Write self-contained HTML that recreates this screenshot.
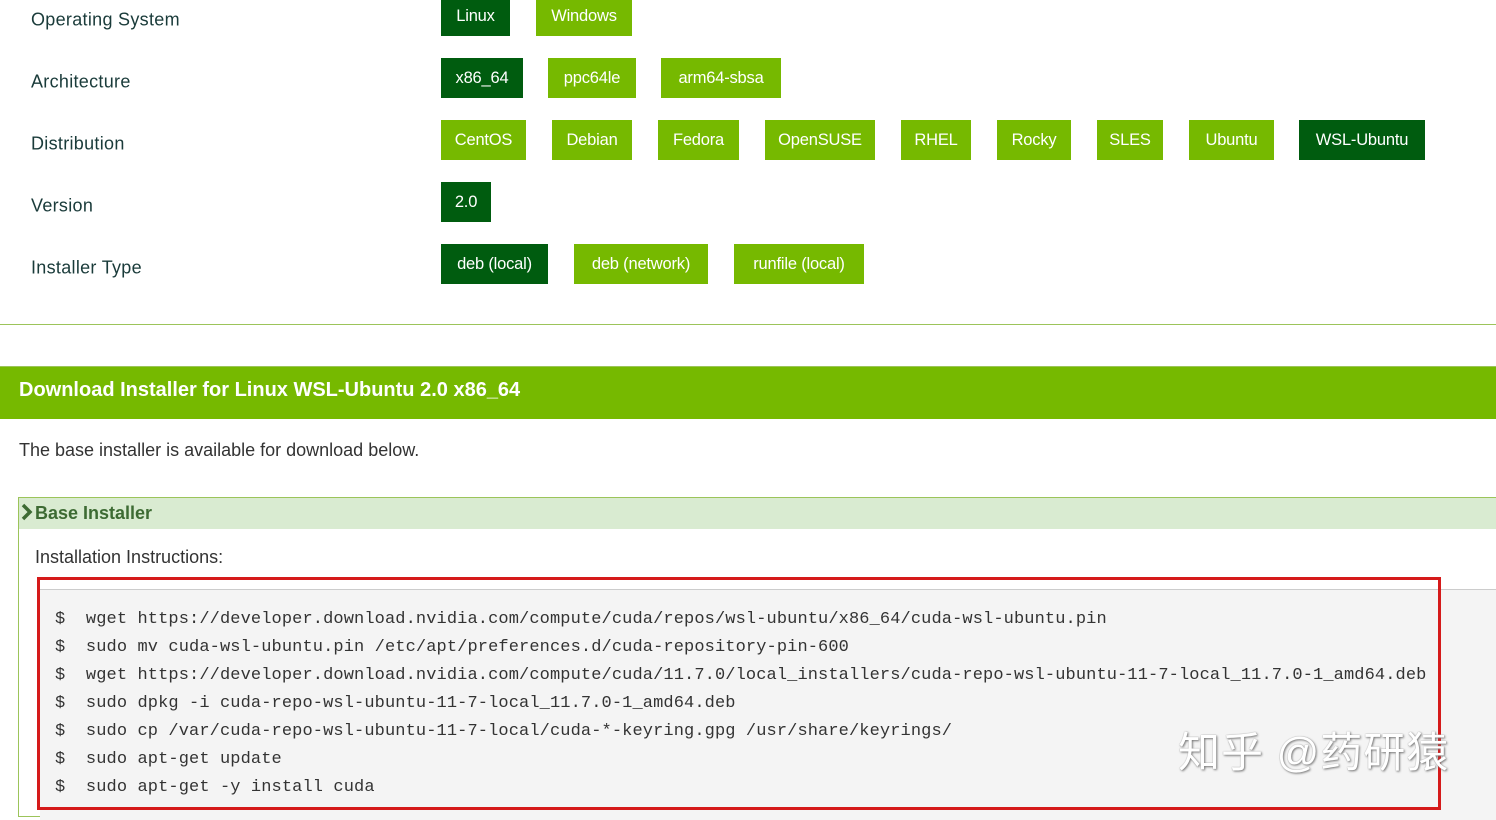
<!DOCTYPE html>
<html><head><meta charset="utf-8"><style>
body{margin:0;width:1496px;height:811px;background:#fff;position:relative;overflow:hidden;font-family:"Liberation Sans",sans-serif}
.l{position:absolute;left:31px;font-size:18px;color:#1a3b3a;letter-spacing:0.3px;transform:translateY(-50%)}
.b{position:absolute;height:40px;line-height:41px;text-align:center;color:#fff;font-size:16.5px;background:#76b900;letter-spacing:-0.2px}
.d{background:#005c0f}
.code{position:absolute;left:55px;font-family:"Liberation Mono",monospace;font-size:17px;letter-spacing:0.11px;color:#333;white-space:pre;line-height:28px}
</style></head><body>
<div class="l" style="top:20px">Operating System</div>
<div class="l" style="top:82px">Architecture</div>
<div class="l" style="top:144px">Distribution</div>
<div class="l" style="top:206px">Version</div>
<div class="l" style="top:268px">Installer Type</div>

<div class="b d" style="top:-4px;left:441px;width:69px">Linux</div>
<div class="b" style="top:-4px;left:536px;width:96px">Windows</div>

<div class="b d" style="top:58px;left:441px;width:82px">x86_64</div>
<div class="b" style="top:58px;left:548px;width:88px">ppc64le</div>
<div class="b" style="top:58px;left:661px;width:120px">arm64-sbsa</div>

<div class="b" style="top:120px;left:441px;width:85px">CentOS</div>
<div class="b" style="top:120px;left:552px;width:80px">Debian</div>
<div class="b" style="top:120px;left:658px;width:81px">Fedora</div>
<div class="b" style="top:120px;left:765px;width:110px">OpenSUSE</div>
<div class="b" style="top:120px;left:901px;width:70px">RHEL</div>
<div class="b" style="top:120px;left:997px;width:74px">Rocky</div>
<div class="b" style="top:120px;left:1097px;width:66px">SLES</div>
<div class="b" style="top:120px;left:1189px;width:85px">Ubuntu</div>
<div class="b d" style="top:120px;left:1299px;width:126px">WSL-Ubuntu</div>

<div class="b d" style="top:182px;left:441px;width:50px">2.0</div>

<div class="b d" style="top:244px;left:441px;width:107px">deb (local)</div>
<div class="b" style="top:244px;left:574px;width:134px">deb (network)</div>
<div class="b" style="top:244px;left:734px;width:130px">runfile (local)</div>

<div style="position:absolute;top:324px;left:0;width:1496px;height:1px;background:#9cc45a"></div>
<div style="position:absolute;top:366px;left:0;width:1496px;height:53px;background:#76b900;border-top:1px solid #9cc45a;box-sizing:border-box"></div>
<div style="position:absolute;top:379px;left:19px;color:#fff;font-size:20px;font-weight:bold">Download Installer for Linux WSL-Ubuntu 2.0 x86_64</div>
<div style="position:absolute;top:440px;left:19px;color:#333;font-size:18px">The base installer is available for download below.</div>

<div style="position:absolute;top:497px;left:18px;width:1478px;height:320px;border:1px solid #9cc45a;border-right:0;box-sizing:border-box"></div>
<div style="position:absolute;top:498px;left:19px;width:1477px;height:31px;background:#d9ebd1"></div>
<svg style="position:absolute;top:503px;left:21px" width="12" height="18" viewBox="0 0 12 18"><path d="M2 2 L9 9 L2 16" stroke="#3d6b33" stroke-width="3.5" fill="none"/></svg>
<div style="position:absolute;top:503px;left:35px;font-size:18px;font-weight:bold;color:#3d6b33">Base Installer</div>
<div style="position:absolute;top:547px;left:35px;font-size:18px;color:#333">Installation Instructions:</div>

<div style="position:absolute;top:589px;left:40px;width:1456px;height:230px;background:#f4f4f4;border-top:1px solid #ccc"></div>
<div style="position:absolute;top:577px;left:37px;width:1404px;height:233px;border:3px solid #d51a1a;box-sizing:border-box"></div>
<div class="code" style="top:606px">$  wget https://developer.download.nvidia.com/compute/cuda/repos/wsl-ubuntu/x86_64/cuda-wsl-ubuntu.pin
$  sudo mv cuda-wsl-ubuntu.pin /etc/apt/preferences.d/cuda-repository-pin-600
$  wget https://developer.download.nvidia.com/compute/cuda/11.7.0/local_installers/cuda-repo-wsl-ubuntu-11-7-local_11.7.0-1_amd64.deb
$  sudo dpkg -i cuda-repo-wsl-ubuntu-11-7-local_11.7.0-1_amd64.deb
$  sudo cp /var/cuda-repo-wsl-ubuntu-11-7-local/cuda-*-keyring.gpg /usr/share/keyrings/
$  sudo apt-get update
$  sudo apt-get -y install cuda</div>
<div style="position:absolute;top:719px;left:1178px;font-family:'Liberation Sans','Noto Sans CJK SC',sans-serif;font-size:42px;color:#fff;text-shadow:1px 1px 2px #777,0 0 1px #999;letter-spacing:1px">知乎 @药研猿</div>
</body></html>
